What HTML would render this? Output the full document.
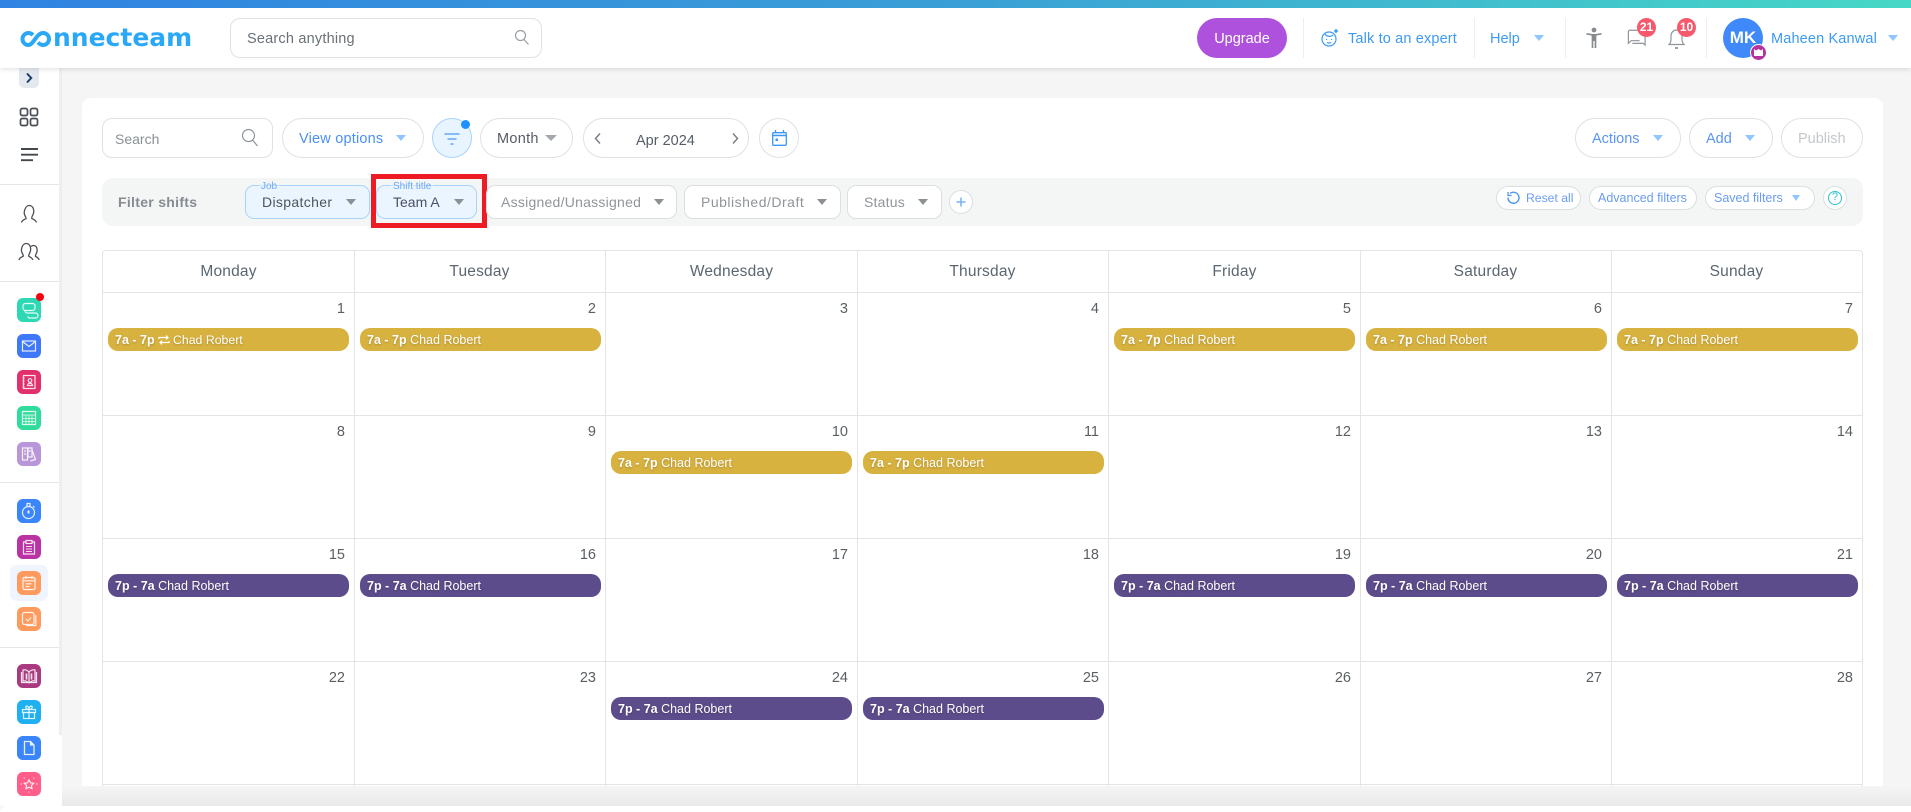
<!DOCTYPE html>
<html lang="en"><head><meta charset="utf-8"><title>Connecteam</title>
<style>
html,body{margin:0;padding:0}
body{width:1911px;height:812px;overflow:hidden;position:relative;background:#f5f5f5;font-family:"Liberation Sans","DejaVu Sans",sans-serif;color:#5b6670}
div,span,svg{position:absolute;box-sizing:border-box}
.t{white-space:nowrap;line-height:20px}
.pill{background:#fff;border:1px solid #dfe1e3;border-radius:20px;height:40px;top:118px}
.fb{height:34px;top:185px;background:#fff;border:1px solid #dcdfe1;border-radius:9px}
.fa{height:34px;top:185px;background:#ebf5ff;border:1px solid #a8d4fb;border-radius:9px}
.sb{height:24px;top:186px;background:#fff;border:1px solid #dcdfe1;border-radius:12px}
.ad,.ag{width:0;height:0;border-left:5px solid transparent;border-right:5px solid transparent}
.ad{border-top:6px solid #90c6ff}
.ag{border-top:6px solid #8b9095}
.vl{background:#e4e4e4;width:1px;top:250px;height:536px}
.hl{background:#e4e4e4;height:1px;left:102px;width:1761px}
.dh{top:262px;height:20px;line-height:20px;text-align:center;font-size:15.5px;color:#5b6670;width:251px;letter-spacing:.2px}
.n{font-size:14.5px;color:#5a5f63;line-height:18px;text-align:right;width:41px}
.ev{height:23px;border-radius:10px;width:241px;color:#fff;font-size:12.5px;line-height:25px;padding-left:7px;white-space:nowrap;text-shadow:0 1px 2px rgba(0,0,0,.22)}
.g{background:#d8b23f}.p{background:#5d4c8b}
.ic{left:17px;width:24px;height:24px;border-radius:6px}
.ic svg{left:0;top:0;width:24px;height:24px;fill:none;stroke:#fff;stroke-width:1.2;opacity:.88}
.sd{left:0;width:59px;height:1px;background:#e6e6e6}
.sp{width:1px;top:18px;height:40px;background:#eceef0}
.bd{width:19px;height:19px;border-radius:50%;background:#f5596b;color:#fff;font-weight:bold;font-size:12px;line-height:19px;text-align:center;top:18px}
</style></head><body>

<!-- page gradient bottom -->
<div style="left:62px;top:786px;width:1849px;height:20px;background:linear-gradient(#f5f5f5,#e9e9e9)"></div>
<!-- sidebar -->
<div style="left:0;top:60px;width:62px;height:746px;background:#fff"></div>
<div style="left:59px;top:60px;width:3px;height:675px;background:#eeeeee"></div>

<div style="left:19px;top:68px;width:20px;height:20px;background:#e4e9ef;border-radius:0 0 5px 5px"></div>
<svg style="left:24px;top:72px" width="10" height="12" viewBox="0 0 10 12"><path d="M3 1.5L7.2 6 3 10.5" fill="none" stroke="#1c3f6e" stroke-width="2"/></svg>
<svg style="left:19px;top:107px" width="20" height="20" viewBox="0 0 20 20" fill="none" stroke="#4a4f55" stroke-width="1.7"><rect x="1.5" y="1.5" width="7" height="7" rx="1.8"/><rect x="11.5" y="1.5" width="7" height="7" rx="1.8"/><rect x="1.5" y="11.5" width="7" height="7" rx="1.8"/><rect x="11.5" y="11.5" width="7" height="7" rx="1.8"/></svg>
<svg style="left:20px;top:146px" width="19" height="17" viewBox="0 0 19 17" fill="none" stroke="#43484e" stroke-width="1.9"><path d="M1 3h17M1 8.7h17M1 14.2h12"/></svg>
<div class="sd" style="top:184px"></div>
<svg style="left:20px;top:204px" width="18" height="20" viewBox="0 0 18 20" fill="none" stroke="#4a4f55" stroke-width="1.3"><path d="M1.5 18.5c.5-2.5 3-3 4.5-3.8.4-1-.3-1.6-1-3-1-2-.8-4.5-.2-6C5.600 3 7.500 1.500 9.200 1.500c2 0 3.800 1.500 4.300 3.700.4 1.800.2 4.300-.8 6-.8 1.400-1.300 2-.9 3.300 1.500.8 4 1.400 4.700 4"/></svg>
<svg style="left:18px;top:242px" width="23" height="20" viewBox="0 0 23 20" fill="none" stroke="#4a4f55" stroke-width="1.3"><path d="M1 18c.5-2.500 2.800-3 4.200-3.800.4-1-.3-1.600-1-3-1-2-.8-4.500-.2-6C4.700 3 6.500 1.500 8.200 1.500c1.800 0 3.500 1.300 4.100 3.300.6 2 .3 4.700-.7 6.500-.8 1.400-1.200 2-.8 3 1.300.8 3.400 1.300 4 3.700M13 4.500c1-.8 1.800-1 2.500-1 1.700 0 3 1.300 3.400 3 .4 1.700.2 3.800-.7 5.300-.7 1.200-1 1.700-.7 2.600 1.200.7 3 1.200 3.700 3.600"/></svg>
<div class="sd" style="top:281px"></div>

<div class="ic" style="top:298px;background:#2fd8b5"><svg viewBox="0 0 24 24"><rect x="6" y="5.500" width="12" height="7" rx="2.500"/><path d="M10 15h8.500a1 1 0 0 1 0 5H12l-1.500-1.500"/><path d="M8 12.500c0 1.500 1 2.500 2 2.500"/></svg></div>
<div style="left:36px;top:293px;width:8px;height:8px;border-radius:50%;background:#f8000f"></div>
<div class="ic" style="top:334px;background:#3f77fb"><svg viewBox="0 0 24 24"><rect x="5.500" y="7" width="13" height="10"/><path d="M5.500 7.500l6.500 5 6.500-5"/></svg></div>
<div class="ic" style="top:370px;background:#e1306c"><svg viewBox="0 0 24 24"><rect x="6.500" y="5.500" width="11.500" height="13"/><path d="M5.500 8h2M5.500 11h2M5.500 14h2M5.500 17h2"/><circle cx="13" cy="10.500" r="1.800"/><path d="M10.500 15.500c.2-3 4.800-3 5 0z"/></svg></div>
<div class="ic" style="top:406px;background:#2fdc9b"><svg viewBox="0 0 24 24"><rect x="5.500" y="5.500" width="13" height="13"/><path d="M5.500 9h13M9 9v9.500M12 9v9.500M15 9v9.500M5.500 12.500h13M5.500 15.500h13" stroke-width=".8"/></svg></div>
<div class="ic" style="top:442px;background:#b995d9"><svg viewBox="0 0 24 24"><rect x="5.500" y="6" width="5" height="12"/><rect x="11" y="6" width="4" height="9"/><path d="M15 8l3.500 9.500-5 1.500M7 9h2M7 12h2M12 9h2" /></svg></div>
<div class="sd" style="top:482px"></div>
<div class="ic" style="top:499px;background:#3b85fb"><svg viewBox="0 0 24 24"><circle cx="11.500" cy="13.500" r="6"/><path d="M10 4.500h3v3h-3zM16 7l1.500 1.500"/><path d="M11.500 11.500v3" stroke-width="2"/></svg></div>
<div class="ic" style="top:535px;background:#bb32a4"><svg viewBox="0 0 24 24"><path d="M9 7H6.500v12h11V7H15"/><rect x="9" y="5.500" width="6" height="3"/><path d="M9 11.500h6M9 14h6M9 16.500h6" stroke-width=".9"/></svg></div>
<div style="left:10px;top:565px;width:38px;height:36px;border-radius:7px;background:#f0f5fd"></div>
<div class="ic" style="top:571px;background:#ff9a5f"><svg viewBox="0 0 24 24"><rect x="6" y="6.500" width="12" height="12" rx="1.500"/><path d="M6 9.800h12M9 5v3M15 5v3M8.500 12.800h6M8.500 15.500h4"/></svg></div>
<div class="ic" style="top:607px;background:#ff9a5f"><svg viewBox="0 0 24 24"><rect x="5.500" y="5.500" width="11.500" height="12" rx="2"/><path d="M18.800 8v10.500h-9.500M9 12l2 2 3-3.500"/></svg></div>
<div class="sd" style="top:647px"></div>
<div class="ic" style="top:664px;background:#a93a7f"><svg viewBox="0 0 24 24"><path d="M12 8c-2-2-4-2.500-6-2v11c2-.5 4 0 6 2 2-2 4-2.500 6-2V6c-2-.5-4 0-6 2zM12 8v11M4.500 8v10.500h15V8"/><path d="M9.500 9.500v6M14.500 9.500v6" stroke-width="1.600"/></svg></div>
<div class="ic" style="top:700px;background:#1fb0f2"><svg viewBox="0 0 24 24"><rect x="5.500" y="9.500" width="13" height="3"/><rect x="6.500" y="12.500" width="11" height="6"/><path d="M12 9.500v9M12 9.500c-3 0-4.500-3.500-2-3.500 1 0 2 2 2 3.500zM12 9.500c3 0 4.500-3.500 2-3.500-1 0-2 2-2 3.500z"/></svg></div>
<div class="ic" style="top:736px;background:#3b85fb"><svg viewBox="0 0 24 24"><path d="M7.500 5.500h6l3.500 3.500v9.500H7.500z" stroke-width="1.300"/><path d="M13.500 5.500V9H17" fill="#fff"/></svg></div>
<div class="ic" style="top:772px;background:#ff5d8a"><svg viewBox="0 0 24 24"><path d="M12 8l1.500 2.800 3.200.5-2.300 2.200.6 3.200-3-1.500-3 1.500.6-3.200-2.300-2.200 3.200-.5z"/><path d="M5 12h-1.500M20.500 12H19M7.500 6.500l-.8-.8M16.500 6.500l.8-.8M12 19.500v1" stroke-width="1"/></svg></div>

<!-- header -->
<div style="left:0;top:0;width:1911px;height:68px;background:#fff;box-shadow:0 1px 5px rgba(0,0,0,.13)"></div>
<div style="left:0;top:0;width:1911px;height:8px;background:linear-gradient(90deg,#3083e2,#3a9fd6 50%,#46d8c6)"></div>

<svg style="left:20px;top:30px" width="36" height="18" viewBox="0 0 36 18" fill="none" stroke="#2aa8f8" stroke-width="4"><path d="M13 5C11.500 3.600 10 3 8.500 3 5 3 2.500 5.700 2.500 9s2.500 6 6 6c5 0 8-12 14.500-12 3.500 0 6 2.700 6 6s-2.500 6-6 6c-2 0-3.500-1-5-2.500"/></svg>
<div class="t" style="left:53px;top:22px;font-family:'DejaVu Sans',sans-serif;font-size:25px;line-height:32px;font-weight:bold;color:#2aa8f8">nnecteam</div>

<div style="left:230px;top:18px;width:312px;height:40px;border:1px solid #dfe1e3;border-radius:10px;background:#fff"></div>
<div class="t" style="left:247px;top:29px;font-size:14.500px;color:#6a7176;letter-spacing:.2px">Search anything</div>
<svg style="left:514px;top:29px" width="16" height="17" viewBox="0 0 16 17" fill="none" stroke="#9a9fa5" stroke-width="1.200"><circle cx="6.500" cy="6.500" r="5"/><path d="M10 10.500l4.500 5"/></svg>

<div style="left:1197px;top:18px;width:90px;height:40px;border-radius:20px;background:#ae52dd"></div>
<div class="t" style="left:1197px;top:29px;width:90px;text-align:center;color:#fff;font-size:14.500px">Upgrade</div>
<div class="sp" style="left:1303px"></div>
<svg style="left:1321px;top:28px" width="18" height="20" viewBox="0 0 18 20" fill="none" stroke="#3a9bf6" stroke-width="1.200"><circle cx="8" cy="11" r="7"/><path d="M4 6c2 3 6 3 8 1M5.500 11v1M10.500 11v1M6 14.500c1 .7 3 .7 4 0"/><path d="M15 1v4M13 3h4" stroke-width="1.500"/></svg>
<div class="t" style="left:1348px;top:29px;font-size:14.500px;color:#3d9af4;letter-spacing:.15px">Talk to an expert</div>
<div class="sp" style="left:1474px"></div>
<div class="t" style="left:1490px;top:29px;font-size:14.500px;color:#3d9af4">Help</div>
<div class="ad" style="left:1534px;top:35px"></div>
<div class="sp" style="left:1565px"></div>
<svg style="left:1585px;top:27px" width="18" height="22" viewBox="0 0 18 22"><circle cx="9" cy="3" r="2.400" fill="#858b91"/><path d="M1.500 6.800l5.500 1h4l5.500-1M7.500 8v13M10.500 8v13" stroke="#858b91" stroke-width="1.700" fill="none"/><rect x="7" y="8" width="4" height="6" fill="#858b91"/></svg>
<svg style="left:1627px;top:28px" width="19" height="19" viewBox="0 0 21 21" fill="none" stroke="#8f959b" stroke-width="1.300"><path d="M16 6.500v-2.500a1.500 1.500 0 0 0-1.500-1.500H3a1.500 1.500 0 0 0-1.500 1.500v13l3-3H14"/><path d="M6 17h12l2 2V8"/></svg>
<div class="bd" style="left:1637px">21</div>
<svg style="left:1668px;top:28px" width="18" height="23" viewBox="0 0 18 23" fill="none" stroke="#8f959b" stroke-width="1.200"><path d="M1 16.500c1.500-1.500 2-2.500 2-5V8c0-3.500 2.500-6 5.500-6s5.500 2.500 5.500 6v3.500c0 2.500.5 3.500 2 5z"/><path d="M7 20h3" stroke-width="1.800"/></svg>
<div class="bd" style="left:1677px">10</div>
<div class="sp" style="left:1706px"></div>
<div style="left:1723px;top:18px;width:40px;height:40px;border-radius:50%;background:#4089fb;color:#fff;font-weight:bold;font-size:17px;line-height:40px;text-align:center">MK</div>
<div style="left:1750px;top:44px;width:17px;height:17px;border-radius:50%;background:#b5329f;border:1px solid #fff"></div>
<svg style="left:1753px;top:48px" width="11" height="9" viewBox="0 0 11 9"><path d="M1 1l2 1.500L5.500 1 8 2.500 10 1v7H1z" fill="#fff"/></svg>
<div class="t" style="left:1771px;top:29px;font-size:14.500px;color:#3d9af4;letter-spacing:.15px">Maheen Kanwal</div>
<div class="ad" style="left:1888px;top:35px"></div>

<!-- panel -->
<div style="left:82px;top:98px;width:1801px;height:688px;background:#fff;border-radius:8px 8px 0 0"></div>

<!-- toolbar -->
<div class="pill" style="left:102px;width:171px;border-radius:10px"></div>
<div class="t" style="left:115px;top:129px;font-size:14px;color:#8a9197">Search</div>
<svg style="left:241px;top:128px" width="18" height="19" viewBox="0 0 18 19" fill="none" stroke="#8d9298" stroke-width="1.200"><circle cx="7.500" cy="7.500" r="6"/><path d="M11.500 12l5 6"/></svg>
<div class="pill" style="left:282px;width:142px"></div>
<div class="t" style="left:299px;top:129px;font-size:14.500px;color:#4a90f5;letter-spacing:.2px">View options</div>
<div class="ad" style="left:396px;top:135px"></div>
<div class="pill" style="left:432px;width:40px;background:#e8f4ff;border-color:#a8d4fb"></div>
<svg style="left:443px;top:132px" width="18" height="14" viewBox="0 0 18 14" fill="none" stroke="#4a97f0" stroke-width="1.300"><path d="M1.500 2h15M4.500 7h9M7.500 12h3"/></svg>
<div style="left:461px;top:120px;width:9px;height:9px;border-radius:50%;background:#1e90ff"></div>
<div class="pill" style="left:480px;width:93px"></div>
<div class="t" style="left:497px;top:129px;font-size:14.500px;color:#555d66;letter-spacing:.3px">Month</div>
<div class="ag" style="left:545px;top:135px;border-top-color:#a3a8ad;border-left-width:6px;border-right-width:6px"></div>
<div class="pill" style="left:583px;width:166px"></div>
<svg style="left:593px;top:132px" width="10" height="13" viewBox="0 0 10 13" fill="none" stroke="#7a8086" stroke-width="1.500"><path d="M7 1.500L2.500 6.500 7 11.500"/></svg>
<div class="t" style="left:636px;top:131px;font-size:14.500px;color:#555d66">Apr 2024</div>
<svg style="left:730px;top:132px" width="10" height="13" viewBox="0 0 10 13" fill="none" stroke="#7a8086" stroke-width="1.500"><path d="M3 1.500L7.500 6.500 3 11.500"/></svg>
<div class="pill" style="left:759px;width:40px"></div>
<svg style="left:771px;top:129px" width="17" height="18" viewBox="0 0 17 18"><rect x="1.700" y="3.700" width="13.600" height="12.600" rx="1" fill="none" stroke="#3a96f8" stroke-width="1.300"/><path d="M1.700 6.500h13.600" stroke="#3a96f8" stroke-width="1.500"/><path d="M4.500 1v3M12.500 1v3" stroke="#3a96f8" stroke-width="1.300"/><rect x="4.500" y="9.500" width="2.500" height="2.500" fill="#3a96f8"/></svg>

<div class="pill" style="left:1575px;width:106px"></div>
<div class="t" style="left:1592px;top:129px;font-size:14.500px;color:#5a94f5">Actions</div>
<div class="ad" style="left:1653px;top:135px"></div>
<div class="pill" style="left:1689px;width:84px"></div>
<div class="t" style="left:1706px;top:129px;font-size:14.500px;color:#5a94f5">Add</div>
<div class="ad" style="left:1745px;top:135px"></div>
<div class="pill" style="left:1781px;width:82px"></div>
<div class="t" style="left:1798px;top:129px;font-size:14.500px;color:#c4c8cc">Publish</div>

<!-- filter bar -->
<div style="left:102px;top:178px;width:1761px;height:48px;background:#f4f6f6;border-radius:11px"></div>
<div class="t" style="left:118px;top:192px;font-size:14px;font-weight:bold;color:#858c92;letter-spacing:.3px">Filter shifts</div>

<div class="fa" style="left:245px;width:125px"></div>
<div class="t" style="left:259px;top:179px;padding:0 2px;font-size:10px;line-height:16px;color:#6fa9f3;background:linear-gradient(transparent 40%,#ebf5ff 40%)">Job</div>
<div class="t" style="left:262px;top:192px;font-size:14px;color:#4d555c;letter-spacing:.35px">Dispatcher</div>
<div class="ag" style="left:346px;top:199px"></div>

<div class="fa" style="left:376px;width:101px"></div>
<div class="t" style="left:391px;top:179px;padding:0 2px;font-size:10px;line-height:16px;color:#6fa9f3;background:linear-gradient(transparent 40%,#ebf5ff 40%)">Shift title</div>
<div class="t" style="left:393px;top:192px;font-size:14px;color:#4a4f68">Team A</div>
<div class="ag" style="left:454px;top:199px"></div>
<div style="left:371px;top:174px;width:116px;height:54px;border:5px solid #ed1c24"></div>

<div class="fb" style="left:486px;width:191px"></div>
<div class="t" style="left:501px;top:192px;font-size:14px;color:#8f959a;letter-spacing:.25px">Assigned/Unassigned</div>
<div class="ag" style="left:654px;top:199px"></div>
<div class="fb" style="left:684px;width:157px"></div>
<div class="t" style="left:701px;top:192px;font-size:14px;color:#8f959a;letter-spacing:.5px">Published/Draft</div>
<div class="ag" style="left:817px;top:199px"></div>
<div class="fb" style="left:847px;width:95px"></div>
<div class="t" style="left:864px;top:192px;font-size:14px;color:#8f959a;letter-spacing:.2px">Status</div>
<div class="ag" style="left:918px;top:199px"></div>
<div style="left:949px;top:190px;width:24px;height:24px;border-radius:50%;background:#fff;border:1px solid #dcdfe1"></div>
<svg style="left:955px;top:196px" width="12" height="12" viewBox="0 0 12 12"><path d="M6 1.500v9M1.500 6h9" stroke="#71b4fb" stroke-width="1.500"/></svg>

<div class="sb" style="left:1496px;width:85px"></div>
<svg style="left:1506px;top:190px" width="15" height="15" viewBox="0 0 15 15" fill="none" stroke="#4a97f0" stroke-width="1.400"><path d="M4 3.500A5.500 5.500 0 1 1 2 7.500"/><path d="M2 2v3.500h3.500" stroke-width="1.300"/></svg>
<div class="t" style="left:1526px;top:188px;font-size:12.200px;color:#6a9cf5">Reset all</div>
<div class="sb" style="left:1589px;width:108px"></div>
<div class="t" style="left:1598px;top:188px;font-size:12.500px;color:#6a9cf5">Advanced filters</div>
<div class="sb" style="left:1705px;width:110px"></div>
<div class="t" style="left:1714px;top:188px;font-size:12.500px;color:#6a9cf5">Saved filters</div>
<div class="ad" style="left:1792px;top:195px;border-left-width:4.500px;border-right-width:4.500px"></div>
<div class="sb" style="left:1823px;width:24px"></div>
<div style="left:1828px;top:191px;width:14px;height:14px;border-radius:50%;border:1.500px solid #2fc4cf;color:#2fc4cf;font-size:11px;line-height:11px;text-align:center">?</div>

<!-- calendar -->
<div style="left:102px;top:250px;width:1761px;height:536px;border:1px solid #e4e4e4;border-bottom:none;border-radius:4px 4px 0 0"></div>
<div class="hl" style="top:292px"></div>
<div class="hl" style="top:415px"></div>
<div class="hl" style="top:538px"></div>
<div class="hl" style="top:661px"></div>
<div class="hl" style="top:784px"></div>
<div class="vl" style="left:354px"></div>
<div class="vl" style="left:605px"></div>
<div class="vl" style="left:857px"></div>
<div class="vl" style="left:1108px"></div>
<div class="vl" style="left:1360px"></div>
<div class="vl" style="left:1611px"></div>

<div class="dh" style="left:103px">Monday</div>
<div class="dh" style="left:354px">Tuesday</div>
<div class="dh" style="left:606px">Wednesday</div>
<div class="dh" style="left:857px">Thursday</div>
<div class="dh" style="left:1109px">Friday</div>
<div class="dh" style="left:1360px">Saturday</div>
<div class="dh" style="left:1611px">Sunday</div>

<div class="n" style="left:304px;top:300px">1</div><div class="n" style="left:555px;top:300px">2</div><div class="n" style="left:807px;top:300px">3</div><div class="n" style="left:1058px;top:300px">4</div><div class="n" style="left:1310px;top:300px">5</div><div class="n" style="left:1561px;top:300px">6</div><div class="n" style="left:1812px;top:300px">7</div>
<div class="n" style="left:304px;top:423px">8</div><div class="n" style="left:555px;top:423px">9</div><div class="n" style="left:807px;top:423px">10</div><div class="n" style="left:1058px;top:423px">11</div><div class="n" style="left:1310px;top:423px">12</div><div class="n" style="left:1561px;top:423px">13</div><div class="n" style="left:1812px;top:423px">14</div>
<div class="n" style="left:304px;top:546px">15</div><div class="n" style="left:555px;top:546px">16</div><div class="n" style="left:807px;top:546px">17</div><div class="n" style="left:1058px;top:546px">18</div><div class="n" style="left:1310px;top:546px">19</div><div class="n" style="left:1561px;top:546px">20</div><div class="n" style="left:1812px;top:546px">21</div>
<div class="n" style="left:304px;top:669px">22</div><div class="n" style="left:555px;top:669px">23</div><div class="n" style="left:807px;top:669px">24</div><div class="n" style="left:1058px;top:669px">25</div><div class="n" style="left:1310px;top:669px">26</div><div class="n" style="left:1561px;top:669px">27</div><div class="n" style="left:1812px;top:669px">28</div>

<div class="ev g" style="left:108px;top:328px"><b>7a - 7p</b></div>
<svg style="left:158px;top:334px" width="12" height="12" viewBox="0 0 12 12" fill="none" stroke="#fff" stroke-width="1.200"><path d="M1 5V3.500h9M8 1.500l2 2-2 2M11 7v1.500H2M4 6.500l-2 2 2 2"/></svg>
<div class="t" style="left:173px;top:330px;color:#fff;font-size:12.300px;text-shadow:0 1px 2px rgba(0,0,0,.22)">Chad Robert</div>
<div class="ev g" style="left:360px;top:328px"><b>7a - 7p</b> Chad Robert</div>
<div class="ev g" style="left:1114px;top:328px"><b>7a - 7p</b> Chad Robert</div>
<div class="ev g" style="left:1366px;top:328px"><b>7a - 7p</b> Chad Robert</div>
<div class="ev g" style="left:1617px;top:328px"><b>7a - 7p</b> Chad Robert</div>
<div class="ev g" style="left:611px;top:451px"><b>7a - 7p</b> Chad Robert</div>
<div class="ev g" style="left:863px;top:451px"><b>7a - 7p</b> Chad Robert</div>

<div class="ev p" style="left:108px;top:574px"><b>7p - 7a</b> Chad Robert</div>
<div class="ev p" style="left:360px;top:574px"><b>7p - 7a</b> Chad Robert</div>
<div class="ev p" style="left:1114px;top:574px"><b>7p - 7a</b> Chad Robert</div>
<div class="ev p" style="left:1366px;top:574px"><b>7p - 7a</b> Chad Robert</div>
<div class="ev p" style="left:1617px;top:574px"><b>7p - 7a</b> Chad Robert</div>
<div class="ev p" style="left:611px;top:697px"><b>7p - 7a</b> Chad Robert</div>
<div class="ev p" style="left:863px;top:697px"><b>7p - 7a</b> Chad Robert</div>

<!-- bottom strip -->
<div style="left:0;top:806px;width:1911px;height:6px;background:#fff;border-radius:8px 0 0 0"></div>
</body></html>
